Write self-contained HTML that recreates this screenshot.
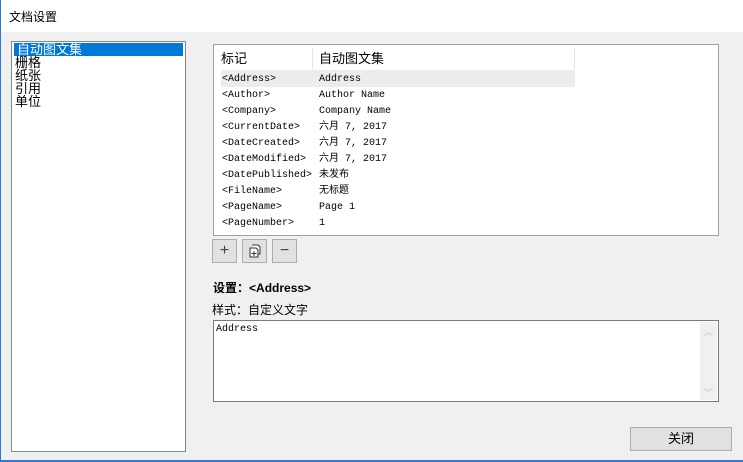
<!DOCTYPE html>
<html><head><meta charset="utf-8"><style>
*{margin:0;padding:0;box-sizing:border-box}
body{width:743px;height:462px;background:#f0f0f0;position:relative;overflow:hidden;font-family:"Liberation Sans","Noto Sans CJK SC",sans-serif;font-size:12px;color:#000}
.title{position:absolute;left:0;top:0;width:743px;height:32px;background:#fff;border-left:1px solid #2b7bd6;}
.title span{position:absolute;left:8px;top:8px;font-size:12px}
.abs{position:absolute}
.list{left:11px;top:41px;width:175px;height:411px;background:#fff;border:1px solid #828790}
.list div{height:13px;line-height:13px;font-size:13px;padding-left:3px}
.sel{background:#0078d7;color:#fff;margin:1px 2px 0 2px}
.table{left:213px;top:44px;width:506px;height:192px;background:#fff;border:1px solid #a0a0a0}
.row{position:absolute;left:8px;height:16px;line-height:16px;font-family:"Liberation Mono","Noto Sans CJK SC",monospace;font-size:10px}
.row span{position:absolute;left:97px;white-space:nowrap}
.btn{position:absolute;top:239px;width:25px;height:24px;background:#e1e1e1;border:1px solid #adadad;text-align:center;line-height:22px;font-size:16px;color:#444}
.ta{left:213px;top:320px;width:506px;height:82px;background:#fff;border:1px solid #7a7a7a}
</style></head><body>
<div class="title"><span>文档设置</span></div>
<div style="position:absolute;left:0;top:32px;width:1px;height:430px;background:#2b7bd6"></div>
<div style="position:absolute;left:0;top:460px;width:743px;height:2px;background:#2b7bd6"></div>
<div class="abs list"><div class="sel">自动图文集</div><div>栅格</div><div>纸张</div><div>引用</div><div>单位</div></div>
<div class="abs table">
<div class="abs" style="left:7px;top:3px;width:355px;height:21px;line-height:21px;font-size:13px">标记<span style="position:absolute;left:98px;">自动图文集</span></div>
<div class="abs" style="left:98px;top:3px;width:1px;height:21px;background:#e5e5e5"></div>
<div class="abs" style="left:360px;top:3px;width:1px;height:21px;background:#e5e5e5"></div>
<div class="abs" style="left:7px;top:25px;width:354px;height:17px;background:#ececec"></div>
<div class="row" style="top:27px">&lt;Address&gt;<span>Address</span></div>
<div class="row" style="top:43px">&lt;Author&gt;<span>Author Name</span></div>
<div class="row" style="top:59px">&lt;Company&gt;<span>Company Name</span></div>
<div class="row" style="top:75px">&lt;CurrentDate&gt;<span>六月 7, 2017</span></div>
<div class="row" style="top:91px">&lt;DateCreated&gt;<span>六月 7, 2017</span></div>
<div class="row" style="top:107px">&lt;DateModified&gt;<span>六月 7, 2017</span></div>
<div class="row" style="top:123px">&lt;DatePublished&gt;<span>未发布</span></div>
<div class="row" style="top:139px">&lt;FileName&gt;<span>无标题</span></div>
<div class="row" style="top:155px">&lt;PageName&gt;<span>Page 1</span></div>
<div class="row" style="top:171px">&lt;PageNumber&gt;<span>1</span></div>
</div>
<div class="btn" style="left:212px">+</div>
<div class="btn" style="left:242px"><svg width="14" height="14" viewBox="0 0 14 14" style="margin-top:4px"><path d="M4 1h6l2 2v7h-2M2 4h6l2 2v7H2z" fill="#fff" stroke="#333"/><path d="M6 7v5M3.5 9.5h5" stroke="#333"/></svg></div>
<div class="btn" style="left:272px">−</div>
<div class="abs" style="left:213px;top:279px;font-size:12px;font-weight:bold">设置：<span style="color:#000">&lt;Address&gt;</span></div>
<div class="abs" style="left:212px;top:301px;font-size:12px">样式：自定义文字</div>
<div class="abs ta"><div style="position:absolute;left:2px;top:3px;font-family:'Liberation Mono',monospace;font-size:10px">Address</div>
<div class="abs" style="right:1px;top:1px;width:17px;height:78px;background:#f0f0f0;color:#bbb;font-size:9px;text-align:center"><div style="margin-top:3px">︿</div><div style="margin-top:48px">﹀</div></div></div>
<div class="abs" style="left:630px;top:427px;width:102px;height:24px;background:#e1e1e1;border:1px solid #adadad;text-align:center;line-height:22px;font-size:13px">关闭</div>
</body></html>
